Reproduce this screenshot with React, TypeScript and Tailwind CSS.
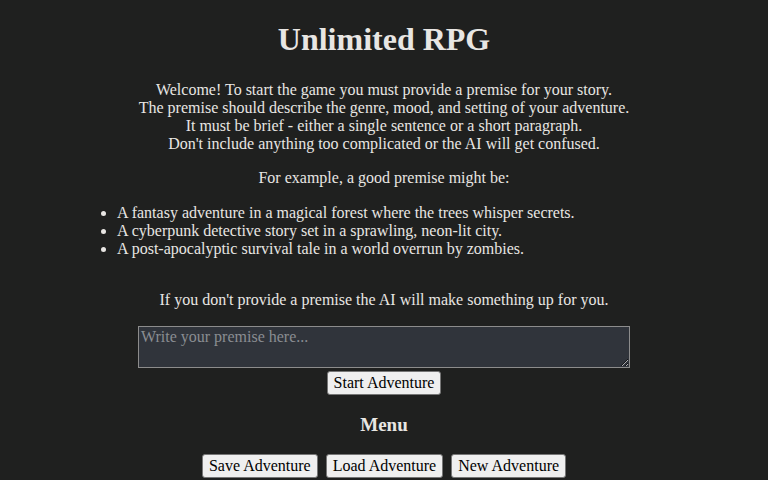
const examples = [
  "A fantasy adventure in a magical forest where the trees whisper secrets.",
  "A cyberpunk detective story set in a sprawling, neon-lit city.",
  "A post-apocalyptic survival tale in a world overrun by zombies.",
];

const btn =
  "bg-[#efefef] text-black border border-[#767676] rounded-[3px] px-[6px] h-[24px] leading-[20px] text-[16px]";

export default function App() {
  return (
    <div className="min-h-[480px] bg-[#1f201f] text-[#e8e6e3] font-['Liberation_Serif',serif] text-[16px] leading-[18px]">
      <h1 className="text-center text-[32px] leading-[37px] font-bold pt-[21px] pb-[23px]">
        Unlimited RPG
      </h1>

      <p className="text-center">
        Welcome! To start the game you must provide a premise for your story.
        <br />
        The premise should describe the genre, mood, and setting of your adventure.
        <br />
        It must be brief - either a single sentence or a short paragraph.
        <br />
        Don't include anything too complicated or the AI will get confused.
      </p>

      <p className="text-center mt-[16px]">For example, a good premise might be:</p>

      <ul className="list-disc ml-[77px] pl-[40px] mt-[17px]">
        {examples.map((e) => (
          <li key={e}>{e}</li>
        ))}
      </ul>

      {/* blank line before the fallback note */}
      <p className="text-center mt-[33px]">
        If you don't provide a premise the AI will make something up for you.
      </p>

      <div className="flex flex-col items-center mt-[17px]">
        <textarea
          rows={2}
          placeholder="Write your premise here..."
          className="w-[492px] h-[42px] bg-[#30343b] border border-[#8c8c8c] px-[2px] py-[1px] text-[16px] leading-[18px] text-[#e8e6e3] placeholder:text-[#8a8d92] font-['Liberation_Serif',serif]"
        />
        <button className={`${btn} mt-[3px]`}>Start Adventure</button>
      </div>

      <h3 className="text-center text-[19px] leading-[22px] font-bold mt-[19px]">Menu</h3>

      <div className="flex justify-center gap-[8px] mt-[18px] pb-[4px]">
        <button className={btn}>Save Adventure</button>
        <button className={btn}>Load Adventure</button>
        <button className={btn}>New Adventure</button>
      </div>
    </div>
  );
}
